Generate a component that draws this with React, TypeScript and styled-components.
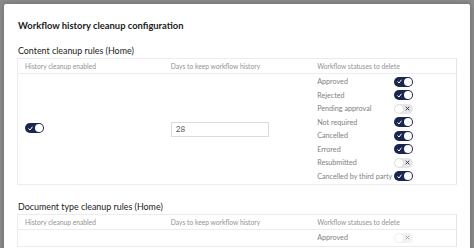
import styled, { createGlobalStyle } from 'styled-components'

const GlobalStyle = createGlobalStyle`
  html, body {
    margin: 0;
    padding: 0;
    background: #8c8c8c;
    font-family: Lato, 'Open Sans', sans-serif;
    overflow: hidden;
  }
`

const Backdrop = styled.div`
  width: 474px;
  height: 248px;
  padding: 4px 4px 0 4px;
  box-sizing: border-box;
  overflow: hidden;
`
const Dialog = styled.div`
  width: 466px;
  height: 260px;
  background: #fff;
  border-radius: 2px 2px 0 0;
  box-shadow: 0 0 6px rgba(0, 0, 0, 0.25);
  padding: 15px 13px 0 13px;
  box-sizing: border-box;
`
const Title = styled.h1`
  margin: 0 0 0 1px;
  font-size: 9.4px;
  line-height: 14px;
  font-weight: 700;
  color: #1b1b1b;
`
const SectionTitle = styled.h2`
  margin: 11px 0 0 1px;
  font-size: 8.9px;
  line-height: 14px;
  font-weight: 400;
  color: #1b1b1b;
  & + table {
    margin-bottom: 15px;
  }
`
const Table = styled.table`
  width: 440px;
  border-collapse: collapse;
  table-layout: fixed;
  border: 1px solid #ececee;
  border-right-color: #e4e4e6;
`
const Th = styled.th`
  text-align: left;
  font-size: 6.7px;
  font-weight: 400;
  color: #929296;
  height: 14px;
  padding: 0 7px;
  border-bottom: 1px solid #ececee;
`
const Td = styled.td`
  padding: 1px 7px 1px 7px;
  vertical-align: middle;
  font-size: 8px;
`
const NumberInput = styled.input`
  width: 98px;
  height: 15px;
  box-sizing: border-box;
  border: 1px solid #dcdbdd;
  padding: 0 4px;
  font-family: inherit;
  font-size: 8px;
  color: #555;
  outline: none;
`
const StatusList = styled.div`
  display: flex;
  flex-direction: column;
`
const StatusRow = styled.div`
  display: flex;
  align-items: center;
  height: 13.5px;
`
const StatusLabel = styled.span`
  width: 77px;
  font-size: 7.2px;
  color: #828185;
  white-space: nowrap;
`
const ToggleTrack = styled.span<{ $on: boolean; $disabled?: boolean }>`
  position: relative;
  display: inline-block;
  width: 19px;
  height: 10px;
  border-radius: 5px;
  background: ${(p) => (p.$on ? '#1b264f' : '#e6e6e8')};
  opacity: ${(p) => (p.$disabled ? 0.45 : 1)};
  flex-shrink: 0;
`
const ToggleKnob = styled.span<{ $on: boolean }>`
  position: absolute;
  top: 1px;
  left: ${(p) => (p.$on ? '10px' : '1px')};
  width: 8px;
  height: 8px;
  border-radius: 50%;
  background: #fff;
  box-shadow: ${(p) => (p.$on ? 'none' : '0 0 1px rgba(0,0,0,0.2)')};
`
const ToggleIcon = styled.svg<{ $on: boolean }>`
  position: absolute;
  top: 2.5px;
  left: ${(p) => (p.$on ? '3px' : '11px')};
  width: 5px;
  height: 5px;
`

function Toggle({ on, disabled }: { on: boolean; disabled?: boolean }) {
  return (
    <ToggleTrack $on={on} $disabled={disabled}>
      {on ? (
        <ToggleIcon $on viewBox="0 0 10 10">
          <polyline points="1.5 5.5 4 8 8.5 2" fill="none" stroke="#fff" strokeWidth="2" strokeLinecap="round" strokeLinejoin="round" />
        </ToggleIcon>
      ) : (
        <ToggleIcon $on={false} viewBox="0 0 10 10">
          <path d="M2 2 L8 8 M8 2 L2 8" stroke="#3a3a3e" strokeWidth="2" strokeLinecap="round" />
        </ToggleIcon>
      )}
      <ToggleKnob $on={on} />
    </ToggleTrack>
  )
}

const STATUSES = [
  { label: 'Approved', on: true },
  { label: 'Rejected', on: true },
  { label: 'Pending approval', on: false },
  { label: 'Not required', on: true },
  { label: 'Cancelled', on: true },
  { label: 'Errored', on: true },
  { label: 'Resubmitted', on: false },
  { label: 'Cancelled by third party', on: true }
]

function RulesHead() {
  return (
    <thead>
      <tr>
        <Th>History cleanup enabled</Th>
        <Th>Days to keep workflow history</Th>
        <Th>Workflow statuses to delete</Th>
      </tr>
    </thead>
  )
}

export default function App() {
  return (
    <>
      <GlobalStyle />
      <Backdrop>
        <Dialog>
          <Title>Workflow history cleanup configuration</Title>
          <SectionTitle>Content cleanup rules (Home)</SectionTitle>
          <Table>
            <RulesHead />
            <tbody>
              <tr>
                <Td>
                  <Toggle on />
                </Td>
                <Td>
                  <NumberInput defaultValue="28" />
                </Td>
                <Td>
                  <StatusList>
                    {STATUSES.map((s) => (
                      <StatusRow key={s.label}>
                        <StatusLabel>{s.label}</StatusLabel>
                        <Toggle on={s.on} />
                      </StatusRow>
                    ))}
                  </StatusList>
                </Td>
              </tr>
            </tbody>
          </Table>
          <SectionTitle>Document type cleanup rules (Home)</SectionTitle>
          <Table>
            <RulesHead />
            <tbody>
              <tr>
                <Td></Td>
                <Td></Td>
                <Td>
                  <StatusList>
                    <StatusRow>
                      <StatusLabel>Approved</StatusLabel>
                      <Toggle on={false} disabled />
                    </StatusRow>
                  </StatusList>
                </Td>
              </tr>
            </tbody>
          </Table>
        </Dialog>
      </Backdrop>
    </>
  )
}
